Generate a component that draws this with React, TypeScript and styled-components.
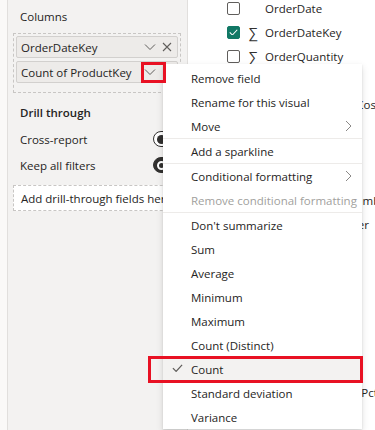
import React from "react";
import styled, { createGlobalStyle } from "styled-components";

const Global = createGlobalStyle`
  html, body { margin: 0; padding: 0; background: #ffffff; }
  body { width: 375px; height: 430px; overflow: hidden; font-family: "Open Sans", "Noto Sans", sans-serif; color: #252423; }
  * { box-sizing: border-box; }
`;

const Screen = styled.div`
  position: relative;
  width: 375px;
  height: 430px;
  display: flex;
  overflow: hidden;
  background: #ffffff;
  font-size: 11.5px;
`;

const Gutter = styled.div`
  width: 7px;
  flex: none;
  background: #faf9f8;
`;

const Pane = styled.div`
  width: 181px;
  flex: none;
  background: #f3f2f1;
  border-left: 1px solid #e1dfdd;
  border-right: 1px solid #e1dfdd;
  padding: 9px 0 0 5px;
  display: flex;
  flex-direction: column;
`;

const SectionLabel = styled.div<{ $bold?: boolean }>`
  height: 16px;
  line-height: 16px;
  padding-left: 7px;
  font-weight: ${(p) => (p.$bold ? 600 : 400)};
  color: #252423;
`;

const Well = styled.div`
  margin-top: 8px;
  width: 168px;
  border: 1px dashed #c8c6c4;
  padding: 2px 2px 9px 2px;
  display: flex;
  flex-direction: column;
  gap: 3px;
`;

const Pill = styled.div`
  height: 22px;
  background: #edebe9;
  border: 1px solid #d2d0ce;
  border-radius: 2px;
  display: flex;
  align-items: center;
  padding-left: 4px;
  gap: 0;
`;

const PillText = styled.span`
  flex: 1;
  white-space: nowrap;
`;

const PillIcon = styled.span`
  width: 14px;
  height: 20px;
  display: flex;
  align-items: center;
  justify-content: center;
  margin-right: 3px;
`;

const DrillTitle = styled(SectionLabel)`
  margin-top: 12px;
`;

const ToggleRow = styled.div`
  height: 26px;
  display: flex;
  align-items: center;
  padding-left: 7px;
  justify-content: space-between;
`;

const Toggle = styled.span<{ $on?: boolean }>`
  width: 40px;
  height: 16px;
  border-radius: 8px;
  border: 1px solid #323130;
  background: ${(p) => (p.$on ? "#323130" : "#ffffff")};
  display: flex;
  align-items: center;
  padding-left: 3px;
  margin-right: -6px;
`;

const Knob = styled.span<{ $on?: boolean }>`
  width: 9px;
  height: 9px;
  border-radius: 50%;
  background: ${(p) => (p.$on ? "transparent" : "#323130")};
  border: ${(p) => (p.$on ? "2px solid #ffffff" : "none")};
`;

const DropBox = styled.div`
  margin-top: 7px;
  height: 26px;
  width: 180px;
  background: #ffffff;
  border: 1px dashed #c8c6c4;
  display: flex;
  align-items: center;
  padding-left: 7px;
  white-space: nowrap;
  overflow: hidden;
`;

const FieldList = styled.div`
  flex: 1;
  display: flex;
  flex-direction: column;
  margin-top: -4px;
  padding-left: 39px;
  white-space: nowrap;
`;

const FieldRow = styled.div`
  height: 24px;
  display: flex;
  align-items: center;
`;

const Check = styled.span<{ $checked?: boolean }>`
  width: 13px;
  height: 13px;
  border-radius: 2px;
  border: 1px solid ${(p) => (p.$checked ? "#117865" : "#605e5c")};
  background: ${(p) => (p.$checked ? "#117865" : "#ffffff")};
  display: flex;
  align-items: center;
  justify-content: center;
  flex: none;
`;

const Sigma = styled.span`
  width: 25px;
  flex: none;
  text-align: center;
  font-size: 14px;
  color: #323130;
  padding-left: 2px;
`;

const FieldName = styled.span`
  font-size: 11.5px;
`;

const Menu = styled.div`
  position: absolute;
  left: 163px;
  top: 64px;
  width: 199px;
  background: #ffffff;
  padding-top: 2px;
  box-shadow: 0 3.2px 7.2px rgba(0, 0, 0, 0.13), 0 0.6px 1.8px rgba(0, 0, 0, 0.11);
  display: flex;
  flex-direction: column;
`;

const Item = styled.div<{ $disabled?: boolean; $active?: boolean }>`
  height: 24px;
  display: flex;
  align-items: center;
  padding-left: 28px;
  padding-right: 10px;
  position: relative;
  white-space: nowrap;
  color: ${(p) => (p.$disabled ? "#a19f9d" : "#252423")};
  background: ${(p) => (p.$active ? "#f3f2f1" : "transparent")};
`;

const ItemLabel = styled.span`
  flex: 1;
`;

const CheckMark = styled.span`
  position: absolute;
  left: 9px;
  top: 7px;
  display: flex;
`;

const Separator = styled.div`
  height: 1px;
  background: #edebe9;
`;

const Highlight = styled.div<{ $l: number; $t: number; $w: number; $h: number }>`
  position: absolute;
  left: ${(p) => p.$l}px;
  top: ${(p) => p.$t}px;
  width: ${(p) => p.$w}px;
  height: ${(p) => p.$h}px;
  border: 3px solid #e81123;
  pointer-events: none;
`;

const Chevron = () => (
  <svg width="12" height="8" viewBox="0 0 12 8">
    <path d="M1 1.5 L6 6.5 L11 1.5" fill="none" stroke="#605e5c" strokeWidth="1" />
  </svg>
);

const Cross = () => (
  <svg width="10" height="10" viewBox="0 0 10 10">
    <path d="M1 1 L9 9 M9 1 L1 9" fill="none" stroke="#605e5c" strokeWidth="1.1" />
  </svg>
);

const RightChevron = () => (
  <svg width="7" height="12" viewBox="0 0 7 12">
    <path d="M1 1 L6 6 L1 11" fill="none" stroke="#8a8886" strokeWidth="1" />
  </svg>
);

const Tick = ({ color = "#ffffff", w = 9 }: { color?: string; w?: number }) => (
  <svg width={w} height={w * 0.75} viewBox="0 0 12 9">
    <path d="M1 4.5 L4.5 8 L11 1" fill="none" stroke={color} strokeWidth="1.4" />
  </svg>
);

type Field = { name: string; checked?: boolean; sigma?: boolean };
const fields: Field[] = [
  { name: "OrderDate" },
  { name: "OrderDateKey", checked: true, sigma: true },
  { name: "OrderQuantity", sigma: true },
  { name: "ProductKey", sigma: true },
  { name: "ProductStandardCost", sigma: true },
  { name: "PromotionKey", sigma: true },
  { name: "RevisionNumber", sigma: true },
  { name: "SalesAmount", sigma: true },
  { name: "SalesOrderLineNumber", sigma: true },
  { name: "SalesOrderNumber" },
  { name: "ShipDate" },
  { name: "ShipDateKey", sigma: true },
  { name: "TaxAmt", sigma: true },
  { name: "TotalCost", sigma: true },
  { name: "UnitPrice", sigma: true },
  { name: "UnitCost", sigma: true },
  { name: "UnitPriceDiscountPct", sigma: true },
  { name: "Freight", sigma: true },
];

type MenuEntry =
  | { sep: true }
  | { label: string; sub?: boolean; disabled?: boolean; active?: boolean };

const menu: MenuEntry[] = [
  { label: "Remove field" },
  { label: "Rename for this visual" },
  { label: "Move", sub: true },
  { sep: true },
  { label: "Add a sparkline" },
  { sep: true },
  { label: "Conditional formatting", sub: true },
  { label: "Remove conditional formatting", disabled: true },
  { sep: true },
  { label: "Don't summarize" },
  { label: "Sum" },
  { label: "Average" },
  { label: "Minimum" },
  { label: "Maximum" },
  { label: "Count (Distinct)" },
  { label: "Count", active: true },
  { label: "Standard deviation" },
  { label: "Variance" },
];

export default function App() {
  return (
    <>
      <Global />
      <Screen>
        <Gutter />
        <Pane>
          <SectionLabel>Columns</SectionLabel>
          <Well>
            <Pill>
              <PillText>OrderDateKey</PillText>
              <PillIcon>
                <Chevron />
              </PillIcon>
              <PillIcon>
                <Cross />
              </PillIcon>
            </Pill>
            <Pill>
              <PillText>Count of ProductKey</PillText>
              <PillIcon style={{ marginRight: 20 }}>
                <Chevron />
              </PillIcon>
            </Pill>
          </Well>
          <DrillTitle $bold>Drill through</DrillTitle>
          <ToggleRow style={{ marginTop: 5 }}>
            <span>Cross-report</span>
            <Toggle>
              <Knob />
            </Toggle>
          </ToggleRow>
          <ToggleRow>
            <span>Keep all filters</span>
            <Toggle $on>
              <Knob $on />
            </Toggle>
          </ToggleRow>
          <DropBox>Add drill-through fields here</DropBox>
        </Pane>
        <FieldList>
          {fields.map((f) => (
            <FieldRow key={f.name}>
              <Check $checked={f.checked}>{f.checked && <Tick />}</Check>
              <Sigma>{f.sigma ? "∑" : ""}</Sigma>
              <FieldName>{f.name}</FieldName>
            </FieldRow>
          ))}
        </FieldList>
        <Menu>
          {menu.map((m, i) =>
            "sep" in m ? (
              <Separator key={i} />
            ) : (
              <Item key={i} $disabled={m.disabled} $active={m.active}>
                {m.active && (
                  <CheckMark>
                    <Tick color="#605e5c" w={11} />
                  </CheckMark>
                )}
                <ItemLabel>{m.label}</ItemLabel>
                {m.sub && <RightChevron />}
              </Item>
            )
          )}
        </Menu>
        <Highlight $l={141} $t={62} $w={25} $h={21} />
        <Highlight $l={148} $t={356} $w={215} $h={27} />
      </Screen>
    </>
  );
}
